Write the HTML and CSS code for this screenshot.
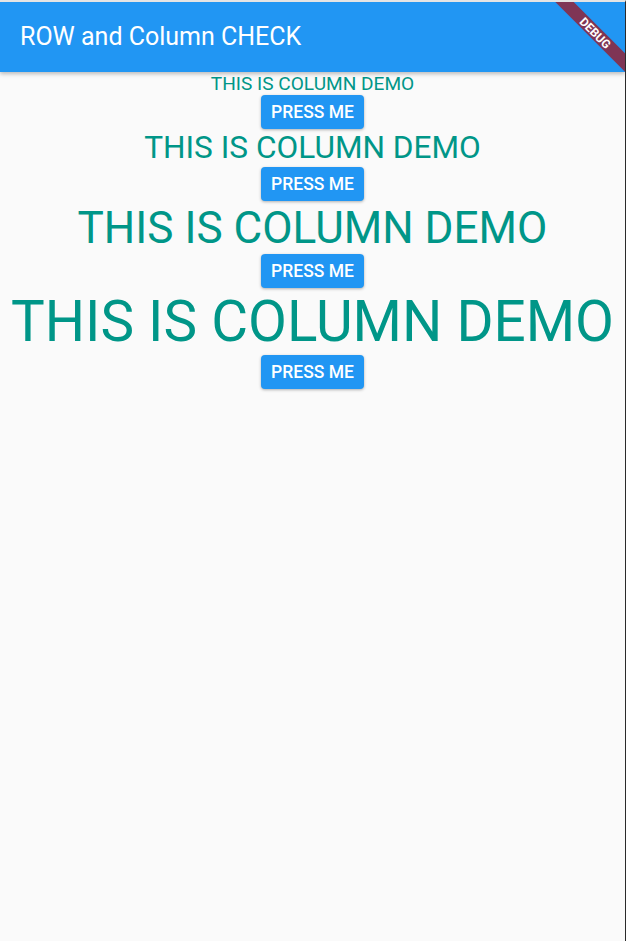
FILE: index.html
```html
<!DOCTYPE html>
<html lang="en">
<head>
    <meta charset="UTF-8">
    <meta name="viewport" content="width=device-width, initial-scale=1.0">
    <title>ROW and Column CHECK</title>
    <link rel="stylesheet" href="styles.css">
</head>
<body>
    <div class="screen">
        <!-- App bar -->
        <header class="app-bar">
            <h1>ROW and Column CHECK</h1>
            <div class="debug-banner"><span>DEBUG</span></div>
        </header>

        <!-- Column content -->
        <main class="column">
            <p class="demo demo-1">THIS IS COLUMN DEMO</p>
            <button class="press-btn">PRESS ME</button>
            <p class="demo demo-2">THIS IS COLUMN DEMO</p>
            <button class="press-btn">PRESS ME</button>
            <p class="demo demo-3">THIS IS COLUMN DEMO</p>
            <button class="press-btn">PRESS ME</button>
            <p class="demo demo-4">THIS IS COLUMN DEMO</p>
            <button class="press-btn">PRESS ME</button>
        </main>
    </div>
</body>
</html>
```

FILE: styles.css
```css
* {
    margin: 0;
    padding: 0;
    box-sizing: border-box;
}

body {
    font-family: Roboto, "Noto Sans", Arial, sans-serif;
    background-color: #fafafa;
    overflow: hidden;
}

.screen {
    width: 626px;
    height: 941px;
    border-top: 2px solid #e4e4e4;
    border-right: 1px solid #2b2b2b;
    background-color: #fafafa;
    position: relative;
    overflow: hidden;
}

/* App bar */
.app-bar {
    height: 70px;
    background-color: #2196f3;
    display: flex;
    align-items: center;
    padding-left: 20px;
    box-shadow: 0 2px 4px rgba(0, 0, 0, 0.25);
    position: relative;
    z-index: 2;
    overflow: hidden;
}

.app-bar h1 {
    color: #fff;
    font-size: 25px;
    font-weight: 400;
    margin-top: -1px;
}

/* Debug ribbon in the corner */
.debug-banner {
    position: absolute;
    left: 535px;
    top: 23.5px;
    width: 120px;
    height: 13px;
    background-color: #7f3555;
    transform: rotate(45deg);
    display: flex;
    align-items: center;
    justify-content: center;
}

.debug-banner span {
    color: #fff;
    font-size: 12px;
    font-weight: 700;
    line-height: 1;
    margin-left: 1px;
}

/* Column */
.column {
    display: flex;
    flex-direction: column;
    align-items: center;
}

.demo {
    color: #009688;
    font-weight: 400;
    white-space: nowrap;
}

.demo-1 { font-size: 19.1px; line-height: 23px; }
.demo-2 { font-size: 31.6px; line-height: 38px; }
.demo-3 { font-size: 44.1px; line-height: 52px; padding-top: 1px; }
.demo-4 { font-size: 56.6px; line-height: 67px; }

.press-btn {
    background-color: #2196f3;
    color: #fff;
    border: none;
    border-radius: 4px;
    width: 103px;
    height: 34px;
    font-family: inherit;
    font-size: 17.5px;
    font-weight: 500;
    box-shadow: 0 1px 3px rgba(0, 0, 0, 0.3);
    cursor: pointer;
}
```
